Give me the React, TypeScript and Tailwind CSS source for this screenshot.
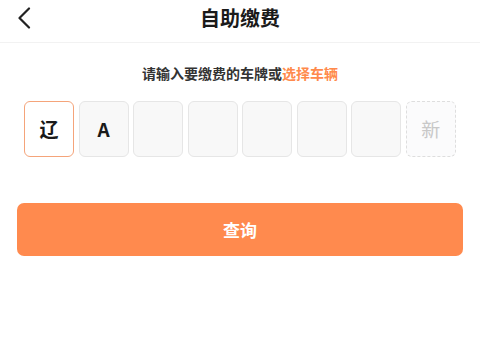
export default function App() {
  const chars = ['辽', 'A', '', '', '', '', ''];

  return (
    <div
      className="w-[480px] h-[348px] bg-white"
      style={{ fontFamily: '"Noto Sans CJK SC", "Liberation Sans", sans-serif' }}
    >
      <div className="relative h-[43px] border-b border-[#f2f2f2] flex items-center justify-center">
        <button className="absolute left-[14px] top-[6px] w-[20px] h-[24px] flex items-center justify-center">
          <svg width="14" height="22" viewBox="0 0 14 22" fill="none">
            <path d="M12 1.5 L2.5 11 L12 20.5" stroke="#222" strokeWidth="2.2" strokeLinecap="round" strokeLinejoin="round" />
          </svg>
        </button>
        <h1 className="text-[20px] font-bold text-[#1a1a1a] leading-none -mt-[6px]">自助缴费</h1>
      </div>

      <p className="mt-[20px] text-center text-[14px] font-bold text-[#333] leading-[20px]">
        请输入要缴费的车牌或<span className="text-[#ff8a4c]">选择车辆</span>
      </p>

      <div className="mt-[18px] px-[24px] flex gap-[4.3px]">
        {chars.map((c, i) => (
          <div
            key={i}
            className={
              i === 0
                ? 'flex-1 h-[56px] rounded-[6px] border-[1.5px] border-[#f5a47a] bg-white flex items-center justify-center text-[19px] font-bold text-[#1a1a1a]'
                : 'flex-1 h-[56px] rounded-[6px] border-[1.5px] border-[#e6e6e6] bg-[#f8f8f8] flex items-center justify-center text-[19px] font-bold text-[#1a1a1a]'
            }
          >
            {c}
          </div>
        ))}
        <div className="flex-1 h-[56px] rounded-[6px] border-[1.5px] border-dashed border-[#dedede] bg-[#fbfbfc] flex items-center justify-center text-[19px] text-[#c8c8c8]">
          新
        </div>
      </div>

      <div className="mt-[46px] px-[17px]">
        <button className="w-full h-[53px] rounded-[7px] bg-[#ff8a4e] text-white text-[17px] font-bold">
          查询
        </button>
      </div>
    </div>
  );
}
